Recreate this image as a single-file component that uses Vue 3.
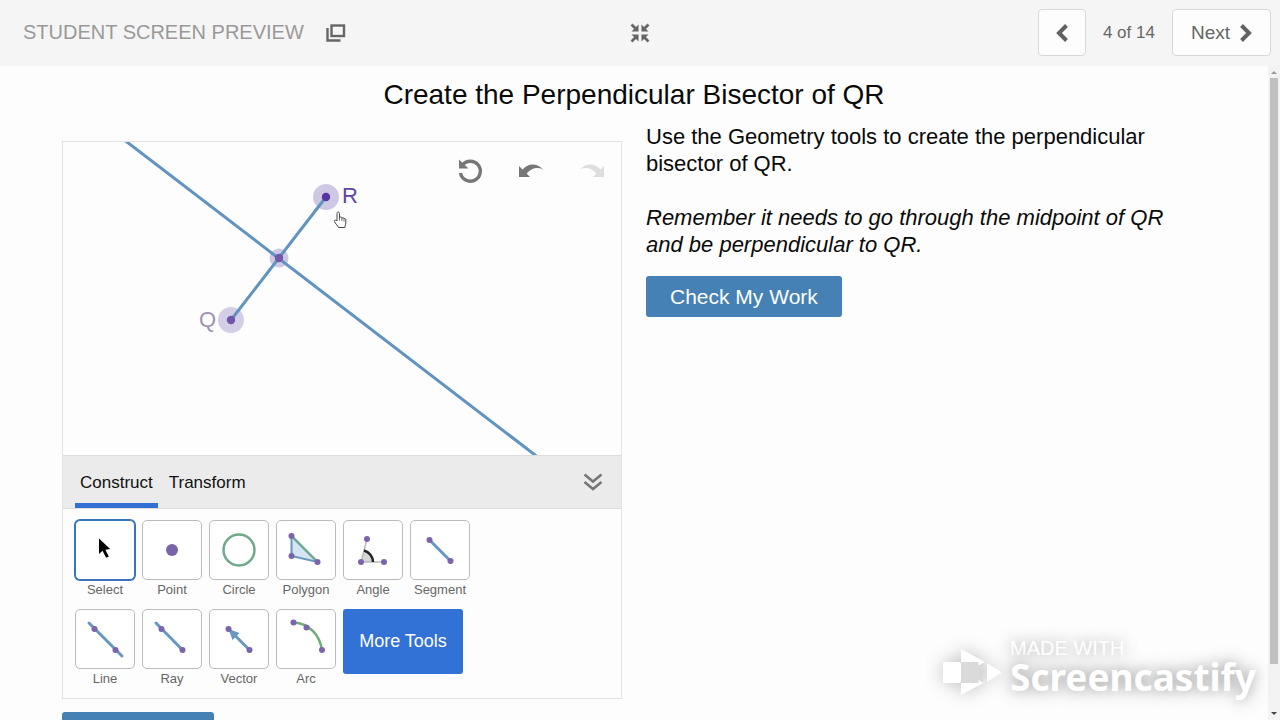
<template>
  <div class="screen">
    <header class="topbar">
      <div class="topbar-left">
        <span class="preview-label">STUDENT SCREEN PREVIEW</span>
        <button class="icon-btn" type="button" aria-label="Open in window">
          <svg width="20" height="18" viewBox="0 0 20 18" fill="none" stroke="#666" stroke-width="2.400">
            <rect x="5.500" y="1.500" width="12.500" height="10.500" />
            <path d="M1.500 4v12.500h13" />
          </svg>
        </button>
      </div>
      <button class="icon-btn" type="button" aria-label="Exit full screen">
        <svg width="20" height="20" viewBox="0 0 20 20" fill="#666" stroke="#666" stroke-width="2.600">
          <g v-for="a in [0, 90, 180, 270]" :key="a" :transform="`rotate(${a} 10 10)`">
            <path d="M1.500 1.500L6 6" />
            <path d="M8.500 1.500v7h-7l2.500-2.500 2-2z" stroke="none" />
          </g>
        </svg>
      </button>
      <nav class="pager">
        <button class="nav-btn prev" type="button" aria-label="Previous">
          <svg width="12" height="18" viewBox="0 0 12 18" fill="none" stroke="#616161" stroke-width="4">
            <path d="M10.500 1.500L3 9l7.500 7.500" />
          </svg>
        </button>
        <span class="count">4 of 14</span>
        <button class="nav-btn next" type="button">
          Next
          <svg width="12" height="18" viewBox="0 0 12 18" fill="none" stroke="#616161" stroke-width="4">
            <path d="M1.500 1.500L9 9l-7.500 7.500" />
          </svg>
        </button>
      </nav>
    </header>

    <div class="body">
      <main class="content">
        <h1>Create the Perpendicular Bisector of QR</h1>
        <div class="columns">
          <div class="left">
            <section class="geometry">
              <div class="canvas">
                <svg class="drawing" viewBox="0 0 558 313">
                  <circle cx="263" cy="55" r="13" fill="#cfc8e4" />
                  <circle cx="168" cy="178" r="13" fill="#d3cde7" />
                  <circle cx="216" cy="116" r="9.500" fill="#cfc8e4" />
                  <g stroke="#6093bf" stroke-width="3">
                    <path d="M62-1.500L474 314.500" />
                    <path d="M263 55L168 178" />
                  </g>
                  <circle cx="263" cy="55" r="4.200" fill="#5636a0" />
                  <circle cx="168" cy="178" r="4.200" fill="#6f56a8" />
                  <circle cx="216" cy="116" r="4.200" fill="#7158aa" />
                  <text x="279" y="61" fill="#6045a4">R</text>
                  <text x="136" y="185" fill="#9c94b0">Q</text>
                  <!-- hand pointer -->
                  <path
                    d="M274 79v-7.500c0-2 2.500-2 2.500 0v4c.8-.8 2.200-.5 2.400.4.8-.5 1.900-.2 2.100.7.9-.3 1.800.2 1.800 1.200v3.200c0 1.800-.8 2.500-1 4.500h-6.300c-1-2-3.200-4-4-6-.6-1.300.8-2.100 2.500-.5z"
                    fill="#fff"
                    stroke="#444"
                    stroke-width="1"
                  />
                  <path d="M276.500 75.500v3M278.900 76v3M281 76.500v3" stroke="#444" stroke-width=".8" />
                </svg>
                <div class="history">
                  <button class="icon-btn" type="button" aria-label="Reset">
                    <svg width="28" height="28" viewBox="0 0 28 28">
                      <path d="M4.500 16a10 10 0 1 0 2-8" fill="none" stroke="#777" stroke-width="3.400" />
                      <path d="M3 2.500v9h9.500z" fill="#777" />
                    </svg>
                  </button>
                  <button class="icon-btn" type="button" aria-label="Undo">
                    <svg width="28" height="28" viewBox="0 0 28 28">
                      <path d="M2 9v11h11l-3.400-3.400C14 11.500 20 9.500 26 12.500 20 5.500 11 6 5.500 12.500z" fill="#777" />
                    </svg>
                  </button>
                  <button class="icon-btn" type="button" aria-label="Redo">
                    <svg width="28" height="28" viewBox="0 0 28 28">
                      <path d="M26 9v11H15l3.400-3.400C14 11.500 8 9.500 2 12.500 8 5.500 17 6 22.500 12.500z" fill="#dedede" />
                    </svg>
                  </button>
                </div>
              </div>

              <div class="tabs">
                <button class="tab active" type="button">Construct</button>
                <button class="tab" type="button">Transform</button>
                <button class="icon-btn collapse" type="button" aria-label="Collapse">
                  <svg width="20" height="18" viewBox="0 0 20 18" fill="none" stroke="#777" stroke-width="2.600">
                    <path d="M1.500 1.500L10 8.500l8.500-7M1.500 9L10 16l8.500-7" />
                  </svg>
                </button>
              </div>

              <div class="tools">
                <div v-for="tool in tools" :key="tool.name" class="tool">
                  <button
                    :id="'tool-' + tool.name"
                    class="tool-btn"
                    :class="{ selected: tool.name === selected }"
                    type="button"
                    :aria-labelledby="'label-' + tool.name"
                    @click="selected = tool.name"
                  >
                    <svg viewBox="0 0 58 58">
                      <path
                        v-for="(p, i) in tool.paths"
                        :key="i"
                        :d="p.d"
                        :fill="p.fill || 'none'"
                        :stroke="p.stroke || 'none'"
                        :stroke-width="p.width || 2"
                        :stroke-linecap="p.cap || 'butt'"
                      />
                      <circle
                        v-for="(pt, i) in tool.points"
                        :key="'pt-' + i"
                        :cx="pt[0]"
                        :cy="pt[1]"
                        :r="pt[2] || 3"
                        fill="#7a64ab"
                      />
                    </svg>
                  </button>
                  <label :id="'label-' + tool.name" :for="'tool-' + tool.name">{{ tool.name }}</label>
                </div>
                <button class="more" type="button">More Tools</button>
              </div>
            </section>
            <button class="blue-btn lower" type="button" aria-label="Submit"></button>
          </div>

          <section class="right">
            <p>Use the Geometry tools to create the perpendicular bisector of QR.</p>
            <p class="hint">Remember it needs to go through the midpoint of QR and be perpendicular to QR.</p>
            <button class="blue-btn" type="button">Check My Work</button>
          </section>
        </div>
      </main>

      <div class="scrollbar" aria-hidden="true">
        <svg width="6" height="4" viewBox="0 0 6 4"><path d="M0 4l3-3 3 3z" fill="#999" /></svg>
        <div class="track"><div class="thumb"></div></div>
        <svg width="6" height="4" viewBox="0 0 6 4"><path d="M0 0l3 3 3-3z" fill="#444" /></svg>
      </div>
    </div>

    <div class="watermark">
      <svg width="60" height="48" viewBox="0 0 60 48">
        <path d="M19 1l24 13-5 4V32l5 2-24 13z" fill="#fff" />
        <rect x="1" y="14" width="18" height="21" rx="1.500" fill="#fff" />
        <path d="M19 14h17.500v3.500l5-2.500v3l-3.500 1v12l3.500 1v3l-5-3v3H19z" fill="#dadada" />
        <path d="M45 15l14.500 9.500L45 34z" fill="#fff" />
      </svg>
      <div class="watermark-text">
        <span class="made">MADE WITH</span>
        <span class="brand">Screencastify</span>
      </div>
    </div>
  </div>
</template>

<script setup>
import { ref } from 'vue'

const selected = ref('Select')

const blue = '#6798c2'
const green = '#6fa88a'

// icons are drawn in a 58x58 box, points are [x, y, r]
const tools = [
  {
    name: 'Select',
    paths: [{ d: 'M23 17.500v15.500l3.500-3.200 3.600 7 2.700-1.300-3.400-6.800 4.800-.6z', fill: '#000' }],
  },
  { name: 'Point', points: [[29, 29, 6]] },
  {
    name: 'Circle',
    paths: [{ d: 'M44.500 29a15.500 15.500 0 1 1-31 0a15.500 15.500 0 1 1 31 0z', stroke: green, width: 2.5 }],
  },
  {
    name: 'Polygon',
    paths: [
      { d: 'M14.500 15v20l26 6z', fill: '#d5e4f1', stroke: blue },
      { d: 'M14.500 15l26 26', stroke: green },
    ],
    points: [[14.5, 15], [14.5, 35], [40.5, 41]],
  },
  {
    name: 'Angle',
    paths: [
      { d: 'M17 41l3-11.500a12 12 0 0 1 9 11.500z', fill: '#d6d6d6' },
      { d: 'M23 18l-6 23h23', stroke: '#bbb', width: 1.5 },
      { d: 'M20 29.500a12 12 0 0 1 9 11.500', stroke: '#222', width: 2.5 },
    ],
    points: [[23, 18], [17, 41], [40, 41]],
  },
  { name: 'Segment', paths: [{ d: 'M18.500 19l21 21', stroke: blue, width: 3 }], points: [[18.5, 19], [39.5, 40]] },
  {
    name: 'Line',
    paths: [{ d: 'M13 13l33 33', stroke: blue, width: 3, cap: 'round' }],
    points: [[18.5, 19], [39.5, 40]],
  },
  {
    name: 'Ray',
    paths: [{ d: 'M13 13l26.500 27', stroke: blue, width: 3, cap: 'round' }],
    points: [[18.5, 19], [39.5, 40]],
  },
  {
    name: 'Vector',
    paths: [
      { d: 'M18.500 19l21 21', stroke: blue, width: 3 },
      { d: 'M18.500 19l11 4-7 7z', fill: blue },
    ],
    points: [[18.5, 19], [39.5, 40]],
  },
  {
    name: 'Arc',
    paths: [{ d: 'M16.500 12.500c16 1 26 12 28.500 27.500', stroke: '#70ab7c', width: 2.5 }],
    points: [[16.5, 12.5], [29.5, 17.5], [45, 40]],
  },
]
</script>

<style>
body {
  margin: 0;
  background: #fdfdfd;
}
</style>

<style scoped>
.screen {
  position: relative;
  display: flex;
  flex-direction: column;
  height: 100vh;
  overflow: hidden;
  font-family: "Liberation Sans", Arial, sans-serif;
  color: #0a0a0a;
}

button {
  font-family: inherit;
  cursor: pointer;
}
svg {
  display: block;
}
.icon-btn {
  padding: 0;
  border: none;
  background: none;
}

/* top bar */
.topbar {
  display: grid;
  grid-template-columns: 1fr auto 1fr;
  align-items: center;
  flex: none;
  height: 66px;
  padding: 0 9px 1px 23px;
  background: #f5f5f5;
  box-sizing: border-box;
}
.topbar > .icon-btn {
  margin-right: 14px;
}
.topbar-left {
  display: flex;
  align-items: center;
  gap: 22px;
}
.preview-label {
  font-size: 20px;
  color: #999;
}
.pager {
  display: flex;
  align-items: center;
  justify-content: flex-end;
  gap: 17px;
}
.nav-btn {
  display: flex;
  align-items: center;
  justify-content: center;
  gap: 10px;
  height: 47px;
  padding: 0 17px;
  border: 1px solid #d8d8d8;
  border-radius: 4px;
  background: #fdfdfd;
  color: #666;
  font-size: 19px;
}
.nav-btn.next {
  padding: 0 18px;
}
.count {
  font-size: 17px;
  color: #666;
}

/* page body */
.body {
  display: flex;
  flex: 1;
  min-height: 0;
}
.content {
  flex: 1;
  min-width: 0;
  padding: 13px 62px 0;
}
h1 {
  margin: 0;
  font-size: 28px;
  line-height: 32px;
  font-weight: 400;
  text-align: center;
}
.columns {
  display: grid;
  grid-template-columns: 1fr 1fr;
  gap: 24px;
  margin-top: 12px;
}
.left {
  padding-top: 18px;
}
.right {
  font-size: 22px;
  line-height: 27px;
}
.right p {
  margin: 0;
}
.right .hint {
  margin: 27px 0 18px;
  font-style: italic;
}
.blue-btn {
  height: 41px;
  padding: 0 24px;
  border: none;
  border-radius: 3px;
  background: #4581b5;
  color: #fff;
  font-size: 21px;
}
.lower {
  display: block;
  width: 152px;
  margin-top: 13px;
}

/* geometry widget */
.geometry {
  border: 1px solid #e4e4e4;
}
.canvas {
  position: relative;
}
.drawing {
  width: 100%;
  font-size: 22px;
}
.history {
  position: absolute;
  top: 15px;
  right: 15px;
  display: flex;
  gap: 33px;
}
.tabs {
  display: flex;
  gap: 6px;
  height: 52px;
  padding: 0 18px 0 12px;
  border-top: 1px solid #ddd;
  border-bottom: 1px solid #ddd;
  background: #ebebeb;
}
.tab {
  padding: 6px 5px 0;
  border: none;
  border-bottom: 5px solid transparent;
  background: none;
  color: #111;
  font-size: 17px;
}
.tab.active {
  border-bottom-color: #3370d4;
}
.collapse {
  margin-left: auto;
}
.tools {
  display: grid;
  grid-template-columns: repeat(6, 60px);
  gap: 9px 7px;
  padding: 11px 12px 9px;
}
.tool {
  display: flex;
  flex-direction: column;
  align-items: center;
}
.tool-btn {
  width: 60px;
  height: 60px;
  padding: 0;
  border: 1px solid #bbb;
  border-radius: 5px;
  background: #fff;
}
.tool-btn.selected {
  border-color: #3b73b9;
  box-shadow: 0 0 0 1px #3b73b9;
}
.tool label {
  font-size: 13px;
  line-height: 20px;
  color: #666;
}
.more {
  grid-column: span 2;
  justify-self: start;
  width: 120px;
  height: 65px;
  padding: 0;
  border: none;
  border-radius: 3px;
  background: #3271d6;
  color: #fff;
  font-size: 18px;
}

/* scrollbar */
.scrollbar {
  display: flex;
  flex-direction: column;
  align-items: center;
  gap: 4px;
  width: 12px;
  padding: 4px 0;
  background: #f3f3f3;
  box-sizing: border-box;
}
.track {
  flex: 1;
  width: 8px;
}
.thumb {
  height: 93%;
  background: #bfbfbf;
}

/* watermark over the page corner */
.watermark {
  position: absolute;
  right: 24px;
  bottom: 24px;
  display: flex;
  align-items: flex-end;
  gap: 8px;
  color: #fff;
}
.watermark svg {
  overflow: visible;
  filter: drop-shadow(0 0 9px rgba(0, 0, 0, 0.25));
}
.watermark-text {
  display: flex;
  flex-direction: column;
  text-shadow: 0 0 20px rgba(0, 0, 0, 0.3), 0 0 12px rgba(0, 0, 0, 0.2);
}
.made {
  font-size: 20px;
  line-height: 20px;
}
.brand {
  font-family: "Noto Sans", "Open Sans", sans-serif;
  font-size: 37px;
  line-height: 38px;
  font-weight: 700;
}
</style>
